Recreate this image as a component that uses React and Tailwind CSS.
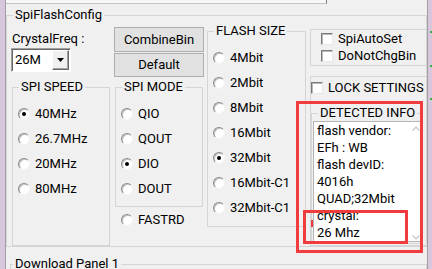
import React from "react";

function Radio({ label, checked, className = "" }) {
  return (
    <div className={`flex items-center gap-[5px] h-[25px] ${className}`}>
      <span className="w-[12px] h-[12px] shrink-0 rounded-full bg-white border border-t-[#8a8a8a] border-l-[#8a8a8a] border-r-[#f4f4f4] border-b-[#f4f4f4] shadow-[inset_1px_1px_0_#c4c4c4] flex items-center justify-center">
        {checked && <span className="w-[4px] h-[4px] rounded-full bg-black" />}
      </span>
      <span className="leading-[16px] whitespace-nowrap">{label}</span>
    </div>
  );
}

function Check({ label, className = "" }) {
  return (
    <div className={`flex items-center gap-[5px] h-[17px] ${className}`}>
      <span className="w-[12px] h-[12px] shrink-0 bg-white border border-t-[#7a7a7a] border-l-[#7a7a7a] border-r-[#e8e8e8] border-b-[#e8e8e8] shadow-[inset_1px_1px_0_#b8b8b8]" />
      <span className="leading-[16px] whitespace-nowrap">{label}</span>
    </div>
  );
}

function Group({ title, className = "", legendClass = "ml-[6px]", children }) {
  return (
    <fieldset className={`border border-[#d5d5d5] min-w-0 shrink-0 ${className}`}>
      <legend className={`${legendClass} px-[2px] leading-[16px] whitespace-nowrap`}>{title}</legend>
      {children}
    </fieldset>
  );
}

function Chevron({ up }) {
  return (
    <svg width="8" height="5" viewBox="0 0 8 5">
      <path
        d={up ? "M0.5 4.5 L4 1 L7.5 4.5" : "M0.5 0.5 L4 4 L7.5 0.5"}
        stroke="#c4c4c4"
        strokeWidth="1.2"
        fill="none"
      />
    </svg>
  );
}

export default function App() {
  const speeds = ["40MHz", "26.7MHz", "20MHz", "80MHz"];
  const modes = ["QIO", "QOUT", "DIO", "DOUT"];
  const sizes = ["4Mbit", "2Mbit", "8Mbit", "16Mbit", "32Mbit", "16Mbit-C1", "32Mbit-C1"];
  const info = ["flash vendor:", "EFh : WB", "flash devID:", "4016h", "QUAD;32Mbit", "crystal:", "26 Mhz"];

  return (
    <div className="relative w-[432px] h-[269px] flex overflow-hidden bg-[#f0f0f0] text-[13px] text-black font-['Roboto',sans-serif]">
      {/* edge of the window behind */}
      <div className="w-[5px] bg-[#d8c6dc]" />
      <div className="w-px bg-[#a0a0a0]" />

      <div className="w-[421px] flex flex-col">
        <div className="w-[321px] h-[4px] shrink-0 bg-[#f7f7f7] border-b border-r border-b-[#c4c4c4] border-r-[#7a7a7a]" />

        <Group title="SpiFlashConfig" className="mt-[3px] h-[240px]">
          <div className="flex h-[223px]">
            {/* crystal + spi speed */}
            <div className="w-[99px] ml-[4px] flex flex-col">
              <div className="mt-[8px] pl-[1px] leading-[16px]">CrystalFreq :</div>
              <div className="mt-[1px] w-[60px] h-[24px] flex items-center bg-white border border-t-[#a0a0a0] border-l-[#a0a0a0] border-r-white border-b-white shadow-[inset_1px_1px_0_#696969]">
                <span className="pl-[3px] leading-[16px]">26M</span>
                <div className="ml-auto mr-[1px] w-[17px] h-[20px] flex items-center justify-center bg-[#f0f0f0] border border-t-white border-l-white border-r-[#696969] border-b-[#696969] shadow-[inset_-1px_-1px_0_#a0a0a0]">
                  <svg width="7" height="4" viewBox="0 0 7 4">
                    <path d="M0 0 H7 L3.5 4 Z" fill="#000" />
                  </svg>
                </div>
              </div>
              <Group title="SPI SPEED" className="mt-[7px] ml-[1px] w-[98px] flex-1">
                <div className="pt-[6px] pl-[5px]">
                  {speeds.map((s, i) => (
                    <Radio key={s} label={s} checked={i === 0} />
                  ))}
                </div>
              </Group>
            </div>

            {/* buttons + spi mode */}
            <div className="w-[90px] ml-[4px] flex flex-col">
              <button className="mt-[4px] h-[25px] bg-[#e1e1e1] border border-[#adadad] leading-[16px]">CombineBin</button>
              <button className="mt-[1px] h-[24px] bg-[#e1e1e1] border border-[#adadad] leading-[16px]">Default</button>
              <Group title="SPI MODE" className="mt-[2px] mx-[1px] h-[128px]">
                <div className="pt-[6px] pl-[5px]">
                  {modes.map((m) => (
                    <Radio key={m} label={m} checked={m === "DIO"} />
                  ))}
                </div>
              </Group>
              <Radio label="FASTRD" className="h-[17px] pl-[7px]" />
            </div>

            {/* flash size */}
            <div className="w-[99px] ml-[3px]">
              <Group title="FLASH SIZE" className="h-[204px]">
                <div className="pt-[6px] pl-[5px]">
                  {sizes.map((s) => (
                    <Radio key={s} label={s} checked={s === "32Mbit"} />
                  ))}
                </div>
              </Group>
            </div>

            {/* options + detected info */}
            <div className="flex-1 ml-[4px] flex flex-col">
              <div className="mt-[6px] h-[37px] border border-r-0 border-[#d5d5d5] pl-[10px]">
                <Check label="SpiAutoSet" />
                <Check label="DoNotChgBin" />
              </div>
              <div className="mt-[10px] flex-1 border border-r-0 border-[#d5d5d5] flex flex-col">
                <Check label="LOCK SETTINGS" className="mt-[2px]" />
                <Group title="DETECTED INFO" className="mt-[9px] w-[110px] h-[139px]">
                  <div className="ml-[1px] w-[109px] h-[121px] flex bg-white border border-[#b4b4b4]">
                    <div className="flex-1 pl-[3px] leading-[17px] whitespace-nowrap">
                      {info.map((t) => (
                        <div key={t}>{t}</div>
                      ))}
                    </div>
                    <div className="w-[11px] flex flex-col items-center justify-between pt-[4px] pb-[1px]">
                      <Chevron up />
                      <Chevron />
                    </div>
                  </div>
                </Group>
              </div>
            </div>
          </div>
        </Group>

        <Group title="Download Panel 1" legendClass="ml-[2px]" className="mt-[9px] ml-[4px] h-[20px]" />
      </div>

      <div className="w-px bg-[#a0a0a0]" />
      <div className="w-[4px] bg-[#d8c6dc] flex flex-col items-end">
        <span className="mt-[31px] w-[2px] h-[2px] bg-[#3cb043]" />
        <span className="mt-[32px] w-[2px] h-[2px] bg-[#3cb043]" />
        <span className="mt-[31px] w-[2px] h-[2px] bg-[#3cb043]" />
      </div>

      {/* red annotation marks */}
      <div className="absolute left-[296px] top-[101px] w-[127px] h-[152px] border-[3px] border-[#f03c3c]" />
      <div className="absolute left-[303px] top-[210px] w-[105px] h-[34px] border-[3px] border-[#f03c3c]" />
      <div className="absolute left-[311px] top-[220px] w-[2px] h-[7px] bg-[#f03c3c]" />
    </div>
  );
}
